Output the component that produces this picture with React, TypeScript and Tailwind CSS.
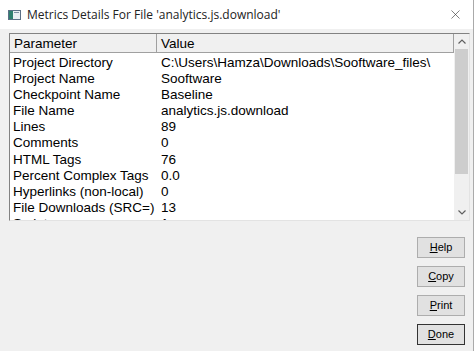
import { X } from "lucide-react"

const rows: [string, string][] = [
	["Project Directory", "C:\\Users\\Hamza\\Downloads\\Sooftware_files\\"],
	["Project Name", "Sooftware"],
	["Checkpoint Name", "Baseline"],
	["File Name", "analytics.js.download"],
	["Lines", "89"],
	["Comments", "0"],
	["HTML Tags", "76"],
	["Percent Complex Tags", "0.0"],
	["Hyperlinks (non-local)", "0"],
	["File Downloads (SRC=)", "13"],
	["Scripts", "1"],
]

function DlgButton({ label, isDefault }: { label: string; isDefault?: boolean }) {
	return (
		<button
			className={
				"flex h-[21px] w-[48px] items-center justify-center bg-[#e1e1e1] text-[11px] text-black " +
				(isDefault ? "border border-[#333]" : "border border-[#adadad]")
			}
		>
			<span>
				<span className="underline">{label[0]}</span>
				{label.slice(1)}
			</span>
		</button>
	)
}

export default function App() {
	return (
		<div
			className="flex h-[351px] w-[474px] flex-col overflow-hidden border-r border-[#aaa] bg-[#f0f0f0]"
			style={{ fontFamily: '"Liberation Sans", Arial, sans-serif' }}
		>
			{/* title bar */}
			<div className="flex h-[29px] items-center bg-white pl-[8px] pr-[10px]">
				<svg width="13" height="10" viewBox="0 0 13 10" className="mr-[6px]">
					<rect x="0" y="0" width="13" height="10" fill="#5b6f86" />
					<rect x="1" y="1" width="11" height="8" fill="#e9eef3" />
					<rect x="1" y="1" width="4" height="8" fill="#2f7f6f" />
					<rect x="6" y="2" width="5" height="1" fill="#7d8fa3" />
				</svg>
				<span
					className="flex-1 text-[12px] text-[#222]"
					style={{ fontFamily: '"Open Sans", "Noto Sans", sans-serif' }}
				>
					Metrics Details For File 'analytics.js.download'
				</span>
				<X size={15} strokeWidth={1} color="#333" />
			</div>

			{/* list view */}
			<div className="ml-[9px] mr-[3px] mt-[4px] flex h-[188px] border border-[#828282] border-r-[#e3e3e3] border-b-[#e3e3e3] bg-white">
				<div className="flex min-w-0 flex-1 flex-col overflow-hidden">
					<div className="flex h-[19px] shrink-0 items-center border-b border-[#a0a0a0] bg-[#f0f0f0] text-[13.5px] text-black">
						<div className="h-full w-[147px] border-r border-[#a0a0a0] pl-[4px] leading-[19px]">
							Parameter
						</div>
						<div className="h-full flex-1 border-r border-[#a0a0a0] pl-[4px] leading-[19px]">Value</div>
					</div>
					<div className="pt-[2px]">
						{rows.map(([k, v]) => (
							<div key={k} className="flex h-[16.1px] text-[13.5px] leading-[16px] text-black">
								<div className="w-[147px] shrink-0 whitespace-nowrap pl-[3px]">{k}</div>
								<div className="whitespace-nowrap pl-[4px]">{v}</div>
							</div>
						))}
					</div>
				</div>
				{/* scrollbar */}
				<div className="flex w-[15px] shrink-0 flex-col bg-[#f0f0f0]">
					<div className="flex h-[15px] items-center justify-center">
						<svg width="8" height="5" viewBox="0 0 8 5">
							<path d="M0.5 4.5 L4 1 L7.5 4.5" fill="none" stroke="#606060" strokeWidth="1.2" />
						</svg>
					</div>
					<div className="mx-[1px] h-[125px] bg-[#cdcdcd]" />
					<div className="flex-1" />
					<div className="flex h-[15px] items-center justify-center">
						<svg width="8" height="5" viewBox="0 0 8 5">
							<path d="M0.5 0.5 L4 4 L7.5 0.5" fill="none" stroke="#606060" strokeWidth="1.2" />
						</svg>
					</div>
				</div>
			</div>

			{/* buttons */}
			<div className="mt-[16px] flex flex-col items-end gap-[8px] pr-[8px]">
				<DlgButton label="Help" />
				<DlgButton label="Copy" />
				<DlgButton label="Print" />
				<DlgButton label="Done" isDefault />
			</div>
		</div>
	)
}
